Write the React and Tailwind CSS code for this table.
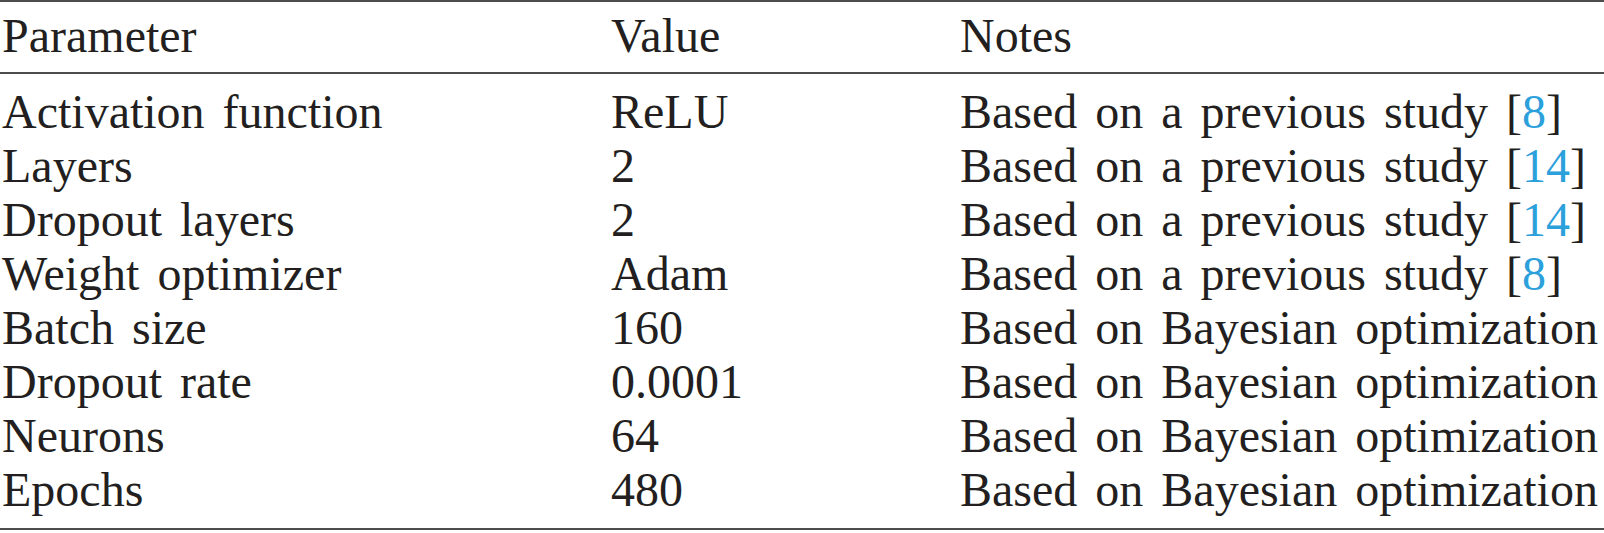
const rows = [
  ["Activation function", "ReLU", "Based on a previous study", "8"],
  ["Layers", "2", "Based on a previous study", "14"],
  ["Dropout layers", "2", "Based on a previous study", "14"],
  ["Weight optimizer", "Adam", "Based on a previous study", "8"],
  ["Batch size", "160", "Based on Bayesian optimization"],
  ["Dropout rate", "0.0001", "Based on Bayesian optimization"],
  ["Neurons", "64", "Based on Bayesian optimization"],
  ["Epochs", "480", "Based on Bayesian optimization"],
];

export default function App() {
  return (
    <div className="h-[533px] w-[1604px] overflow-hidden bg-white text-[#231f20] font-['Liberation_Serif','Times_New_Roman',serif] text-[48px] leading-[54px] [word-spacing:6px]">
      <div className="border-t-2 border-b-2 border-[#4d4d4d]">
        <div className="grid h-[72px] grid-cols-[609px_349px_1fr] border-b-2 border-[#4d4d4d] pl-[2px] pt-[7px]">
          <span>Parameter</span>
          <span>Value</span>
          <span>Notes</span>
        </div>
        <div className="pt-[11px] pb-[11px]">
          {rows.map(([p, v, n, ref]) => (
            <div key={p} className="grid h-[54px] grid-cols-[609px_349px_1fr] pl-[2px]">
              <span className="whitespace-nowrap">{p}</span>
              <span>{v}</span>
              <span className="whitespace-nowrap">
                {n}
                {ref && (
                  <>
                    {" "}[<span className="text-[#2ba0db]">{ref}</span>]
                  </>
                )}
              </span>
            </div>
          ))}
        </div>
      </div>
    </div>
  );
}
